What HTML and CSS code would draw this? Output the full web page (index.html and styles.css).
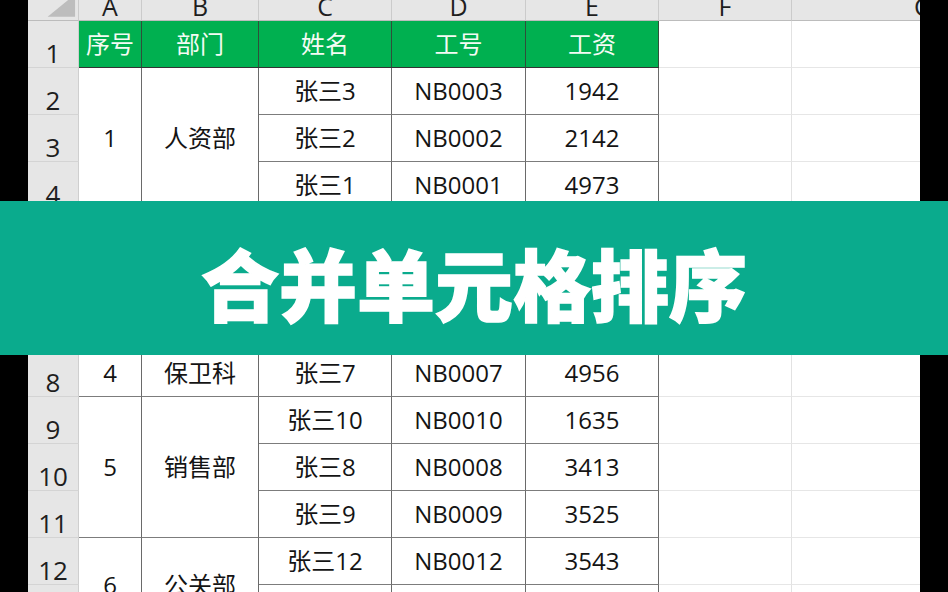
FILE: index.html
```html
<!DOCTYPE html>
<html lang="zh-CN">
<head>
<meta charset="utf-8">
<title>合并单元格排序</title>
<link rel="stylesheet" href="styles.css">
</head>
<body>
<div class="sheet">
  <div class="ch corner"><svg class="tri" width="51" height="20" viewBox="0 0 51 20"><polygon points="48,-6 48,17 20,17" fill="#bdbdbd"/></svg></div>
  <div class="ch">A</div><div class="ch">B</div><div class="ch">C</div><div class="ch">D</div><div class="ch">E</div><div class="ch">F</div><div class="ch last">G</div>

  <div class="rh">1</div>
  <div class="c hd">序号</div><div class="c hd">部门</div><div class="c hd">姓名</div><div class="c hd">工号</div><div class="c hd">工资</div><div class="c e"></div><div class="c e last"></div>

  <div class="rh">2</div>
  <div class="c span3">1</div><div class="c span3">人资部</div><div class="c">张三3</div><div class="c">NB0003</div><div class="c">1942</div><div class="c e"></div><div class="c e last"></div>
  <div class="rh">3</div>
  <div class="c">张三2</div><div class="c">NB0002</div><div class="c">2142</div><div class="c e"></div><div class="c e last"></div>
  <div class="rh">4</div>
  <div class="c">张三1</div><div class="c">NB0001</div><div class="c">4973</div><div class="c e"></div><div class="c e last"></div>

  <div class="rh hidden-row"></div>
  <div class="c span2"></div><div class="c span2"></div><div class="c"></div><div class="c"></div><div class="c"></div><div class="c e"></div><div class="c e last"></div>
  <div class="rh hidden-row"></div>
  <div class="c"></div><div class="c"></div><div class="c"></div><div class="c e"></div><div class="c e last"></div>
  <div class="rh hidden-row"></div>
  <div class="c"></div><div class="c"></div><div class="c"></div><div class="c"></div><div class="c"></div><div class="c e"></div><div class="c e last"></div>

  <div class="rh">8</div>
  <div class="c">4</div><div class="c">保卫科</div><div class="c">张三7</div><div class="c">NB0007</div><div class="c">4956</div><div class="c e"></div><div class="c e last"></div>

  <div class="rh">9</div>
  <div class="c span3">5</div><div class="c span3">销售部</div><div class="c">张三10</div><div class="c">NB0010</div><div class="c">1635</div><div class="c e"></div><div class="c e last"></div>
  <div class="rh">10</div>
  <div class="c">张三8</div><div class="c">NB0008</div><div class="c">3413</div><div class="c e"></div><div class="c e last"></div>
  <div class="rh">11</div>
  <div class="c">张三9</div><div class="c">NB0009</div><div class="c">3525</div><div class="c e"></div><div class="c e last"></div>

  <div class="rh">12</div>
  <div class="c span2">6</div><div class="c span2">公关部</div><div class="c">张三12</div><div class="c">NB0012</div><div class="c">3543</div><div class="c e"></div><div class="c e last"></div>
  <div class="rh">13</div>
  <div class="c">张三11</div><div class="c">NB0011</div><div class="c">2760</div><div class="c e"></div><div class="c e last"></div>
</div>

<div class="banner">合并单元格排序</div>
</body>
</html>
```

FILE: styles.css
```css
html, body {
  margin: 0;
  padding: 0;
}

body {
  width: 948px;
  height: 592px;
  overflow: hidden;
  position: relative;
  background: #000;
  font-family: "Open Sans", "Noto Sans CJK SC", sans-serif;
}

.sheet {
  margin-left: 28px;
  width: 892px;
  height: 592px;
  overflow: hidden;
  background: #fff;
  display: grid;
  grid-template-columns: 51px 63px 117px 133px 134px 133px 133px 262px;
  grid-template-rows: 21px;
  grid-auto-rows: 47px;
}

.c {
  box-sizing: border-box;
  display: flex;
  align-items: center;
  justify-content: center;
  font-size: 24px;
  line-height: 1;
  color: #141414;
  border-right: 1px solid #6a6a6a;
  border-bottom: 1px solid #7c7c7c;
  white-space: nowrap;
}

.c.e {
  border-right-color: #e2e2e2;
  border-bottom-color: #e6e6e6;
}

.c.hd {
  background: #00b050;
  color: #f4fbf4;
  border-right-color: #2f4f3a;
  border-bottom-color: #333;
}

.span3 {
  grid-row: span 3;
}

.span2 {
  grid-row: span 2;
}

.ch {
  box-sizing: border-box;
  display: flex;
  align-items: flex-end;
  justify-content: center;
  padding-bottom: 1px;
  background: #e6e6e6;
  border-right: 1px solid #cbcbcb;
  border-bottom: 1px solid #bcbcbc;
  font-size: 25px;
  line-height: 1;
  color: #1e1e1e;
  overflow: visible;
}

.corner {
  position: relative;
  align-items: stretch;
  padding: 0;
}

.tri {
  display: block;
}

.rh {
  box-sizing: border-box;
  display: flex;
  align-items: flex-end;
  justify-content: center;
  padding-bottom: 1px;
  background: #e6e6e6;
  border-right: 1px solid #cfcfcf;
  border-bottom: 1px solid #d4d4d4;
  font-size: 26px;
  line-height: 1;
  color: #1e1e1e;
}

.last {
  border-right: none;
}

.banner {
  position: absolute;
  left: 0;
  top: 201px;
  width: 948px;
  height: 154px;
  box-sizing: border-box;
  padding-top: 8px;
  background: #0aab8d;
  color: #fff;
  display: flex;
  align-items: center;
  justify-content: center;
  font-family: "Noto Sans CJK SC", sans-serif;
  font-weight: 900;
  font-size: 78px;
  line-height: 1;
  -webkit-text-stroke: 1.5px #fff;
}
```
